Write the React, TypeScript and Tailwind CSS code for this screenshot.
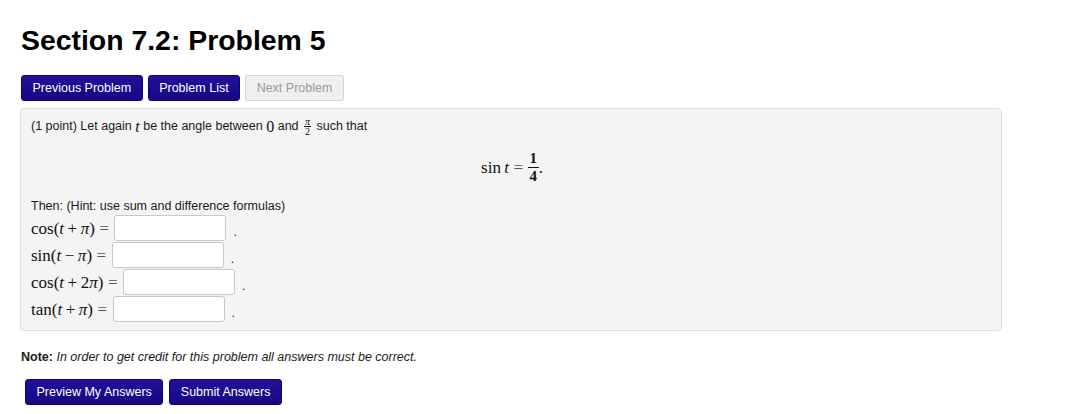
import React from 'react';

const sans = { fontFamily: '"Liberation Sans", Arial, sans-serif' };

function NavButton({ label, disabled = false }: { label: string; disabled?: boolean }) {
  if (disabled) {
    return (
      <button className="h-[26px] px-[10.5px] rounded-[3px] border border-[#d4d4d4] bg-[#efefef] text-[#9a9a9a] text-[12.5px] leading-none">
        {label}
      </button>
    );
  }
  return (
    <button className="h-[26px] px-[10.5px] rounded-[3px] border border-[#0d056e] bg-gradient-to-b from-[#22119a] to-[#150784] text-white text-[12.5px] leading-none">
      {label}
    </button>
  );
}

const M = ({ children, className = '' }: { children: React.ReactNode; className?: string }) => (
  <span className={`font-['Liberation_Serif',serif] text-[#111] ${className}`}>{children}</span>
);
const I = ({ children }: { children: React.ReactNode }) => <i className="italic">{children}</i>;

// binary op / relation with TeX-like spacing
const Op = ({ c }: { c: string }) => <span className="mx-[3.5px]">{c}</span>;
const Rel = ({ c }: { c: string }) => <span className="mx-[4.5px] text-[#555]">{c}</span>;

interface Row {
  fn: string;
  op: string;
  rhs: React.ReactNode;
}

const ROWS: Row[] = [
  { fn: 'cos', op: '+', rhs: <I>π</I> },
  { fn: 'sin', op: '−', rhs: <I>π</I> },
  { fn: 'cos', op: '+', rhs: <>2<I>π</I></> },
  { fn: 'tan', op: '+', rhs: <I>π</I> },
];

export default function App() {
  return (
    <div className="min-h-[414px] bg-white text-[#1a1a1a] pl-[21px]" style={sans}>
      <h1 className="pt-[22px] text-[28.4px] leading-[36px] font-bold text-black">Section 7.2: Problem 5</h1>

      <div className="mt-[17px] flex gap-[5px]">
        <NavButton label="Previous Problem" />
        <NavButton label="Problem List" />
        <NavButton label="Next Problem" disabled />
      </div>

      <div className="mt-[7px] ml-[-1px] w-[982px] rounded-[4px] border border-[#e0e0e0] bg-[#f4f4f4] px-[10px] pt-[8px] pb-[7px] text-[12.5px] leading-[17px]">
        <div className="flex items-center">
          <span>(1 point) Let again&nbsp;</span>
          <M className="text-[16px]"><I>t</I></M>
          <span>&nbsp;be the angle between&nbsp;</span>
          <M className="text-[16px]">0</M>
          <span>&nbsp;and&nbsp;</span>
          <span className="inline-flex flex-col items-center font-['Liberation_Serif',serif] text-[10px] leading-[9px] text-[#111] mx-[2px]">
            <i>π</i>
            <span className="w-[7px] border-t border-[#111]" />
            <span>2</span>
          </span>
          <span>&nbsp;such that</span>
        </div>

        <div className="flex items-center justify-center pl-[2px] my-[14px] h-[34px]">
          <M className="text-[17px]">sin&thinsp;<I>t</I></M>
          <M className="text-[17px]"><Rel c="=" /></M>
          <span className="inline-flex flex-col items-center font-['Liberation_Serif',serif] text-[15px] leading-[15px] text-[#111] font-bold">
            <span>1</span>
            <span className="w-[11px] border-t border-[#111] my-[1px]" />
            <span>4</span>
          </span>
          <M className="text-[17px] self-center">.</M>
        </div>

        <div>Then: (Hint: use sum and difference formulas)</div>

        <div>
          {ROWS.map((r, i) => (
            <div key={i} className="flex items-center h-[27px]">
              <M className="text-[17px] whitespace-nowrap">
                {r.fn}(<I>t</I><Op c={r.op} />{r.rhs})<Rel c="=" />
              </M>
              <input
                type="text"
                className="ml-[1px] h-[26px] w-[112px] rounded-[3px] border border-[#c8c8c8] bg-white mb-[1px]"
              />
              <span className="ml-[7px] mt-[8px] text-[12px]">.</span>
            </div>
          ))}
        </div>
      </div>

      <p className="mt-[18px] text-[12.5px] leading-[17px] text-[#1a1a1a]">
        <b>Note:</b> <i>In order to get credit for this problem all answers must be correct.</i>
      </p>

      <div className="mt-[13px] ml-[4px] flex gap-[6px]">
        <NavButton label="Preview My Answers" />
        <NavButton label="Submit Answers" />
      </div>
    </div>
  );
}
